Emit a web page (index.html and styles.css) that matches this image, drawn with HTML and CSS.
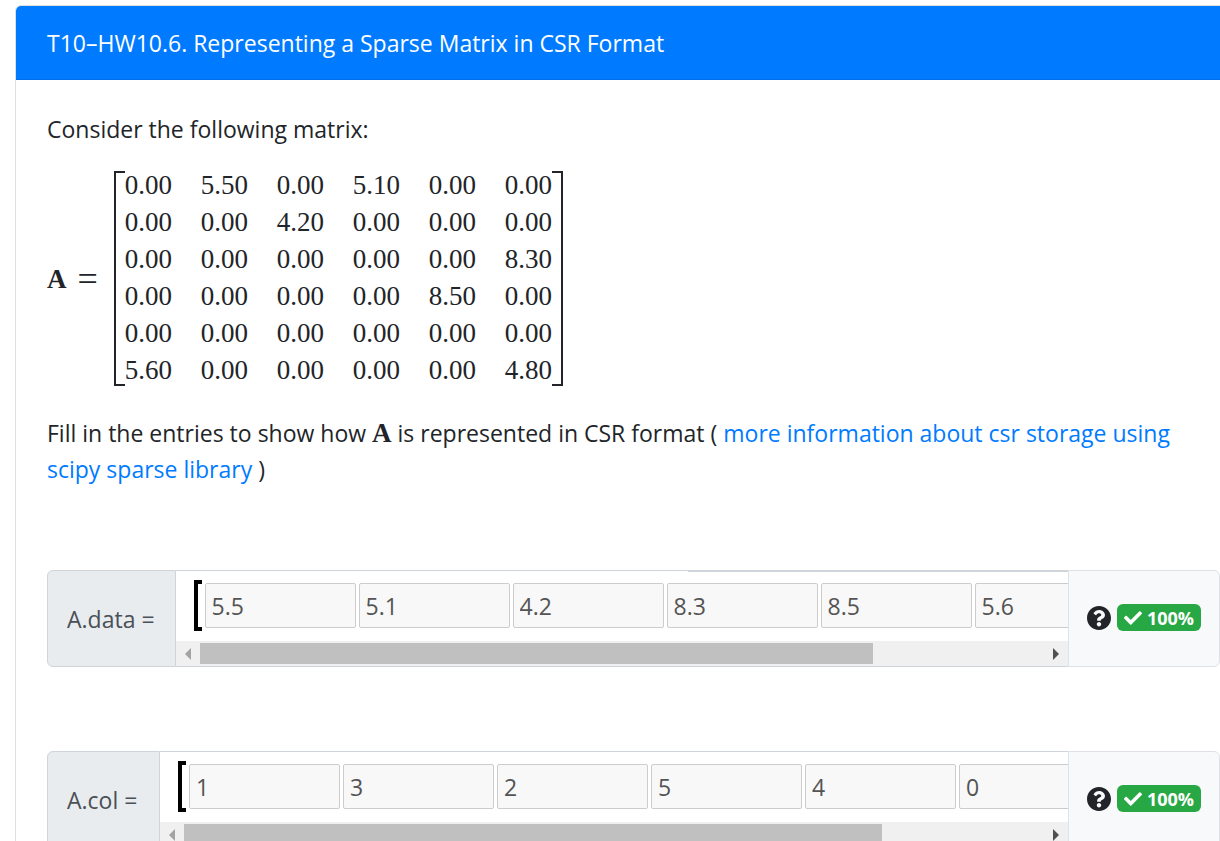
FILE: index.html
```html
<!DOCTYPE html>
<html lang="en">
<head>
    <meta charset="utf-8">
    <title>T10–HW10.6. Representing a Sparse Matrix in CSR Format</title>
    <link rel="stylesheet" href="styles.css">
</head>
<body>
    <!-- shared icons -->
    <svg class="sprite" width="0" height="0">
        <symbol id="question" viewBox="8 8 496 496">
            <path d="M504 256c0 136.997-111.043 248-248 248S8 392.997 8 256C8 119.083 119.043 8 256 8s248 111.083 248 248zM262.655 90c-54.497 0-89.255 22.957-116.549 63.758-3.536 5.286-2.353 12.415 2.715 16.258l34.699 26.31c5.205 3.947 12.621 3.008 16.665-2.122 17.864-22.658 30.113-35.797 57.303-35.797 20.429 0 45.698 13.148 45.698 32.958 0 14.976-12.363 22.667-32.534 33.976C247.128 238.528 216 254.941 216 296v4c0 6.627 5.373 12 12 12h56c6.627 0 12-5.373 12-12v-1.333c0-28.462 83.186-29.647 83.186-106.667 0-58.002-60.165-102-116.531-102zM256 338c-25.365 0-46 20.635-46 46 0 25.364 20.635 46 46 46s46-20.636 46-46c0-25.364-20.635-46-46-46z"/>
        </symbol>
        <symbol id="check" viewBox="0 0 512 512">
            <path d="M173.898 439.404l-166.4-166.4c-9.997-9.997-9.997-26.206 0-36.204l36.203-36.204c9.997-9.998 26.207-9.998 36.204 0L192 312.69 432.095 72.596c9.997-9.997 26.207-9.997 36.204 0l36.203 36.204c9.997 9.997 9.997 26.206 0 36.204l-294.4 294.401c-9.998 9.997-26.207 9.997-36.204-.001z"/>
        </symbol>
        <symbol id="left" viewBox="0 0 6 12"><path d="M6 0v12L0 6z"/></symbol>
        <symbol id="right" viewBox="0 0 6 12"><path d="M0 0v12l6-6z"/></symbol>
    </svg>

    <div class="card">
        <div class="card-header">T10–HW10.6. Representing a Sparse Matrix in CSR Format</div>
        <div class="card-body">
            <p>Consider the following matrix:</p>

            <div class="equation">
                <b>A</b>
                <span class="equals">=</span>
                <div class="matrix">
                    <table>
                        <tr><td>0.00</td><td>5.50</td><td>0.00</td><td>5.10</td><td>0.00</td><td>0.00</td></tr>
                        <tr><td>0.00</td><td>0.00</td><td>4.20</td><td>0.00</td><td>0.00</td><td>0.00</td></tr>
                        <tr><td>0.00</td><td>0.00</td><td>0.00</td><td>0.00</td><td>0.00</td><td>8.30</td></tr>
                        <tr><td>0.00</td><td>0.00</td><td>0.00</td><td>0.00</td><td>8.50</td><td>0.00</td></tr>
                        <tr><td>0.00</td><td>0.00</td><td>0.00</td><td>0.00</td><td>0.00</td><td>0.00</td></tr>
                        <tr><td>5.60</td><td>0.00</td><td>0.00</td><td>0.00</td><td>0.00</td><td>4.80</td></tr>
                    </table>
                </div>
            </div>

            <p>Fill in the entries to show how <b class="math">A</b> is represented in CSR format ( <a href="#">more information about csr storage using scipy sparse library</a> )</p>

            <div class="input-group">
                <label class="prepend" for="data-0">A.data =</label>
                <div class="scroller scroller-data">
                    <div class="entries">
                        <span class="bracket"></span>
                        <input type="text" id="data-0" value="5.5" readonly>
                        <input type="text" aria-label="A.data 1" value="5.1" readonly>
                        <input type="text" aria-label="A.data 2" value="4.2" readonly>
                        <input type="text" aria-label="A.data 3" value="8.3" readonly>
                        <input type="text" aria-label="A.data 4" value="8.5" readonly>
                        <input type="text" aria-label="A.data 5" value="5.6" readonly>
                    </div>
                    <div class="scrollbar">
                        <svg class="arrow disabled"><use href="#left"/></svg>
                        <div class="track"><div class="thumb" style="width: 79.7%"></div></div>
                        <svg class="arrow"><use href="#right"/></svg>
                    </div>
                </div>
                <div class="append">
                    <button type="button" class="help" aria-label="Help"><svg><use href="#question"/></svg></button>
                    <span class="badge"><svg><use href="#check"/></svg>100%</span>
                </div>
            </div>

            <div class="input-group">
                <label class="prepend" for="col-0">A.col =</label>
                <div class="scroller">
                    <div class="entries">
                        <span class="bracket"></span>
                        <input type="text" id="col-0" value="1" readonly>
                        <input type="text" aria-label="A.col 1" value="3" readonly>
                        <input type="text" aria-label="A.col 2" value="2" readonly>
                        <input type="text" aria-label="A.col 3" value="5" readonly>
                        <input type="text" aria-label="A.col 4" value="4" readonly>
                        <input type="text" aria-label="A.col 5" value="0" readonly>
                    </div>
                    <div class="scrollbar">
                        <svg class="arrow disabled"><use href="#left"/></svg>
                        <div class="track"><div class="thumb" style="width: 81.2%"></div></div>
                        <svg class="arrow"><use href="#right"/></svg>
                    </div>
                </div>
                <div class="append">
                    <button type="button" class="help" aria-label="Help"><svg><use href="#question"/></svg></button>
                    <span class="badge"><svg><use href="#check"/></svg>100%</span>
                </div>
            </div>
        </div>
    </div>
</body>
</html>
```
FILE: styles.css
```css
* {
    box-sizing: border-box;
}

body {
    margin: 0;
    height: 100vh;
    overflow: hidden;
    background-color: #fff;
    color: #212529;
    font-family: "Segoe UI", "Open Sans", sans-serif;
    font-size: 23px;
    line-height: 36px;
}

.sprite {
    position: absolute;
}

/* the card runs past the right edge of the window */
.card {
    margin: 5px -32px 0 15px;
    border: 1px solid #dfdfdf;
    border-radius: 6px;
}

.card-header {
    padding: 19px 31px 18px;
    background-color: #007bff;
    border-bottom: 1px solid #006fe6;
    border-radius: 5px 5px 0 0;
    color: #fff;
}

.card-body {
    padding: 31px;
}

p {
    margin: 0 40px 24px 0;
}

a {
    color: #007bff;
    text-decoration: none;
}

.equation,
.math {
    font-family: "Liberation Serif", serif;
    font-size: 27px;
}

.math {
    line-height: 24px;
}

.equation {
    display: flex;
    align-items: center;
    margin-bottom: 29px;
}

.equals {
    margin: 0 16px 0 11px;
    font-size: 36px;
}

.matrix {
    position: relative;
    padding: 0 10px 0 11px;
}

.matrix::before,
.matrix::after {
    content: "";
    position: absolute;
    top: 0;
    bottom: 0;
    width: 9px;
    border: 2px solid #212529;
}

.matrix::before {
    left: 0;
    border-right: none;
}

.matrix::after {
    right: 0;
    border-left: none;
}

table {
    border-collapse: collapse;
    margin: -5px 0 -2px;
}

td {
    width: 76px;
    height: 37px;
    padding: 0;
}

td:last-child {
    width: 48px;
}

.input-group {
    display: flex;
    margin: 83px 0 84px;
}

.input-group + .input-group {
    margin-top: 0;
}

.prepend,
.append {
    display: flex;
    align-items: center;
    border: 1px solid #ced4da;
}

.prepend {
    min-width: 113px;
    padding: 0 20px 0 19px;
    background-color: #e9ecef;
    border-radius: 6px 0 0 6px;
    color: #495057;
}

.append {
    gap: 6px;
    padding: 0 18px 2px;
    background-color: #f8f9fa;
    border-color: #dee2e6;
    border-radius: 0 6px 6px 0;
}

.scroller {
    flex: 1;
    min-width: 0;
    border: solid #ced4da;
    border-width: 1px 0;
}

.scroller-data {
    background: linear-gradient(#ced4da, #ced4da) top right / 380px 1px no-repeat;
}

.entries {
    display: flex;
    align-items: center;
    gap: 3px;
    height: 70px;
    padding: 0 0 2px 18px;
    overflow: hidden;
}

.bracket {
    flex: none;
    width: 8px;
    height: 51px;
    border: 4px solid #000;
    border-right: none;
}

input {
    flex: none;
    width: 151px;
    height: 45px;
    padding: 2px 6px 0;
    background-color: #f8f8f8;
    border: 1px solid #ccc;
    border-radius: 2px;
    color: #545454;
    font: inherit;
}

.scrollbar {
    display: flex;
    align-items: center;
    height: 25px;
    background-color: #f0f0f0;
}

.arrow {
    flex: none;
    width: 6px;
    height: 12px;
    margin: 0 9px;
    fill: #505050;
}

.disabled {
    fill: #a3a3a3;
}

.track {
    flex: 1;
}

.thumb {
    height: 21px;
    background-color: #c0c0c0;
}

.help {
    display: flex;
    padding: 0;
    background: none;
    border: none;
    cursor: pointer;
}

.help svg {
    width: 24px;
    height: 24px;
    fill: #212529;
}

.badge {
    display: flex;
    align-items: center;
    gap: 5px;
    height: 27px;
    padding: 0 7px;
    background-color: #28a745;
    border-radius: 6px;
    color: #fff;
    font-size: 18px;
    font-weight: bold;
}

.badge svg {
    width: 18px;
    height: 18px;
    fill: #fff;
}
```
